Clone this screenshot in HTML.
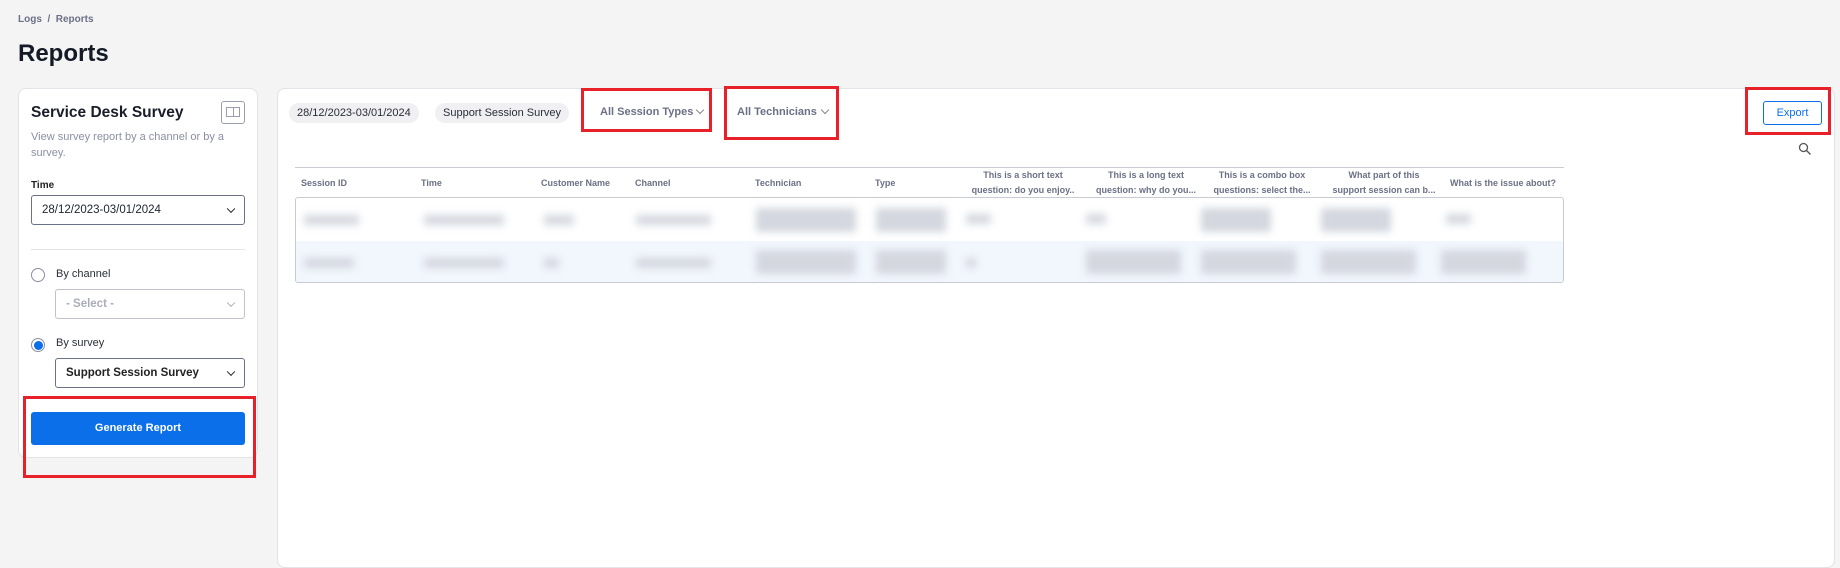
<!DOCTYPE html>
<html><head><meta charset="utf-8"><style>
*{box-sizing:border-box;margin:0;padding:0}
body{width:1840px;height:550px;background:#f4f4f5;font-family:"Liberation Sans",sans-serif;position:relative;overflow:hidden;color:#1f2230}
.a{position:absolute}
.crumb{left:18px;top:14px;font-size:10px;color:#6b7185;font-weight:bold}
.h1{left:18px;top:40px;font-size:24px;font-weight:bold;color:#141a26}
.panel{background:#fff;border:1px solid #e2e3e8;border-radius:8px}
.sel{border:1px solid #6b7186;border-radius:3px;background:#fff;font-size:11.5px;padding-left:10px;display:flex;align-items:center}
.chev{position:absolute;right:10px;top:50%;width:6px;height:6px;border-right:1.6px solid #222;border-bottom:1.6px solid #222;transform:translateY(-70%) rotate(45deg)}
.chip{background:#f0f0f2;border-radius:10px;font-size:11px;height:20px;line-height:20px;padding:0 8px;color:#2a2d38}
.red{border:3px solid #e8202a}
.th{font-size:9px;color:#6b7086;font-weight:bold;line-height:15px}
.b{position:absolute;background:#d4d7df;filter:blur(4px);border-radius:2px}
</style></head><body>
<div class="a crumb">Logs &nbsp;/&nbsp; Reports</div>
<div class="a h1">Reports</div>

<div class="a panel" style="left:18px;top:88px;width:240px;height:370px"></div>
<div class="a" style="left:31px;top:104px;font-size:15.5px;font-weight:bold;color:#1a1d29">Service Desk Survey</div>
<div class="a" style="left:221px;top:101px;width:24px;height:23px;border:1px solid #9a9dad;border-radius:3px"></div>
<div class="a" style="left:226px;top:107px;width:14px;height:10px;border:1px solid #9a9dad"></div>
<div class="a" style="left:233px;top:107px;width:1px;height:10px;background:#9a9dad"></div>
<div class="a" style="left:31px;top:130px;font-size:11px;color:#8a8fa3;line-height:15.5px;width:210px">View survey report by a channel or by a survey.</div>
<div class="a" style="left:31px;top:180px;font-size:10px;font-weight:bold;color:#222">Time</div>
<div class="a sel" style="left:31px;top:195px;width:214px;height:30px">28/12/2023-03/01/2024<span class="chev"></span></div>
<div class="a" style="left:31px;top:249px;width:214px;height:1px;background:#e4e5ea"></div>
<div class="a" style="left:31px;top:268px;width:14px;height:14px;border:1.3px solid #8a8ea0;border-radius:50%"></div>
<div class="a" style="left:56px;top:268px;font-size:11px;color:#2a2d38">By channel</div>
<div class="a sel" style="left:55px;top:289px;width:190px;height:30px;border-color:#bfc2cc;color:#aaadb8;font-weight:bold">- Select -<span class="chev" style="border-color:#aaadb8;border-width:1px"></span></div>
<div class="a" style="left:31px;top:338px;width:14px;height:14px;border:1.3px solid #8a8ea0;border-radius:50%"></div>
<div class="a" style="left:33.5px;top:340.5px;width:9px;height:9px;background:#0a6fe8;border-radius:50%"></div>
<div class="a" style="left:56px;top:337px;font-size:11px;color:#2a2d38">By survey</div>
<div class="a sel" style="left:55px;top:358px;width:190px;height:30px;color:#222;font-weight:bold">Support Session Survey<span class="chev"></span></div>
<div class="a" style="left:31px;top:412px;width:214px;height:33px;background:#0a6fe8;border-radius:3px;color:#fff;font-size:11px;font-weight:bold;text-align:center;line-height:33px">Generate Report</div>
<div class="a red" style="left:23px;top:396px;width:233px;height:82px"></div>

<div class="a panel" style="left:277px;top:88px;width:1558px;height:480px"></div>
<div class="a chip" style="left:289px;top:103px">28/12/2023-03/01/2024</div>
<div class="a chip" style="left:435px;top:103px">Support Session Survey</div>
<div class="a" style="left:600px;top:106px;font-size:11px;color:#6b7086;font-weight:bold">All Session Types</div>
<div class="a" style="left:697px;top:107px;width:6px;height:6px;border-right:1px solid #888;border-bottom:1px solid #888;transform:rotate(45deg)"></div>
<div class="a red" style="left:581px;top:88px;width:131px;height:44px"></div>
<div class="a" style="left:737px;top:106px;font-size:11px;color:#6b7086;font-weight:bold">All Technicians</div>
<div class="a" style="left:822px;top:107px;width:6px;height:6px;border-right:1px solid #888;border-bottom:1px solid #888;transform:rotate(45deg)"></div>
<div class="a red" style="left:724px;top:86px;width:115px;height:54px"></div>
<div class="a" style="left:1763px;top:101px;width:59px;height:24px;border:1px solid #0a6fe8;border-radius:3px;color:#0a6fe8;font-size:11px;text-align:center;line-height:22px">Export</div>
<div class="a red" style="left:1745px;top:87px;width:86px;height:48px"></div>
<svg class="a" style="left:1798px;top:142px" width="14" height="14" viewBox="0 0 14 14"><circle cx="5.5" cy="5.5" r="4" fill="none" stroke="#555" stroke-width="1.3"/><path d="M8.5 8.5L12.5 12.5" stroke="#555" stroke-width="1.4"/></svg>

<div class="a" style="left:295px;top:167px;width:1269px;height:1px;background:#c9cbd3"></div>
<div class="a th" style="left:301px;top:176px">Session ID</div>
<div class="a th" style="left:421px;top:176px">Time</div>
<div class="a th" style="left:541px;top:176px">Customer Name</div>
<div class="a th" style="left:635px;top:176px">Channel</div>
<div class="a th" style="left:755px;top:176px">Technician</div>
<div class="a th" style="left:875px;top:176px">Type</div>
<div class="a th" style="left:963px;top:168px;width:120px;text-align:center">This is a short text<br>question: do you enjoy..</div>
<div class="a th" style="left:1086px;top:168px;width:120px;text-align:center">This is a long text<br>question: why do you...</div>
<div class="a th" style="left:1202px;top:168px;width:120px;text-align:center">This is a combo box<br>questions: select the...</div>
<div class="a th" style="left:1324px;top:168px;width:120px;text-align:center">What part of this<br>support session can b...</div>
<div class="a th" style="left:1442px;top:176px;width:122px;text-align:center">What is the issue about?</div>

<div class="a" style="left:295px;top:197px;width:1269px;height:86px;border:1px solid #c9cbd3;border-radius:3px;background:#fff;overflow:hidden">
<div class="a" style="left:0;top:43px;width:1269px;height:43px;background:#f2f6fd"></div>
<div class="b" style="left:8px;top:17px;width:55px;height:10px"></div>
<div class="b" style="left:128px;top:17px;width:80px;height:10px"></div>
<div class="b" style="left:248px;top:17px;width:30px;height:10px"></div>
<div class="b" style="left:340px;top:17px;width:75px;height:10px"></div>
<div class="b" style="left:460px;top:10px;width:100px;height:24px"></div>
<div class="b" style="left:580px;top:10px;width:70px;height:24px"></div>
<div class="b" style="left:670px;top:16px;width:25px;height:10px"></div>
<div class="b" style="left:790px;top:16px;width:20px;height:10px"></div>
<div class="b" style="left:905px;top:10px;width:70px;height:24px"></div>
<div class="b" style="left:1025px;top:10px;width:70px;height:24px"></div>
<div class="b" style="left:1150px;top:16px;width:25px;height:10px"></div>
<div class="b" style="left:8px;top:60px;width:50px;height:10px"></div>
<div class="b" style="left:128px;top:60px;width:80px;height:10px"></div>
<div class="b" style="left:248px;top:60px;width:15px;height:10px"></div>
<div class="b" style="left:340px;top:60px;width:75px;height:10px"></div>
<div class="b" style="left:460px;top:52px;width:100px;height:24px"></div>
<div class="b" style="left:580px;top:52px;width:70px;height:24px"></div>
<div class="b" style="left:670px;top:60px;width:10px;height:10px"></div>
<div class="b" style="left:790px;top:52px;width:95px;height:24px"></div>
<div class="b" style="left:905px;top:52px;width:95px;height:24px"></div>
<div class="b" style="left:1025px;top:52px;width:95px;height:24px"></div>
<div class="b" style="left:1145px;top:52px;width:85px;height:24px"></div>
</div>
</body></html>
